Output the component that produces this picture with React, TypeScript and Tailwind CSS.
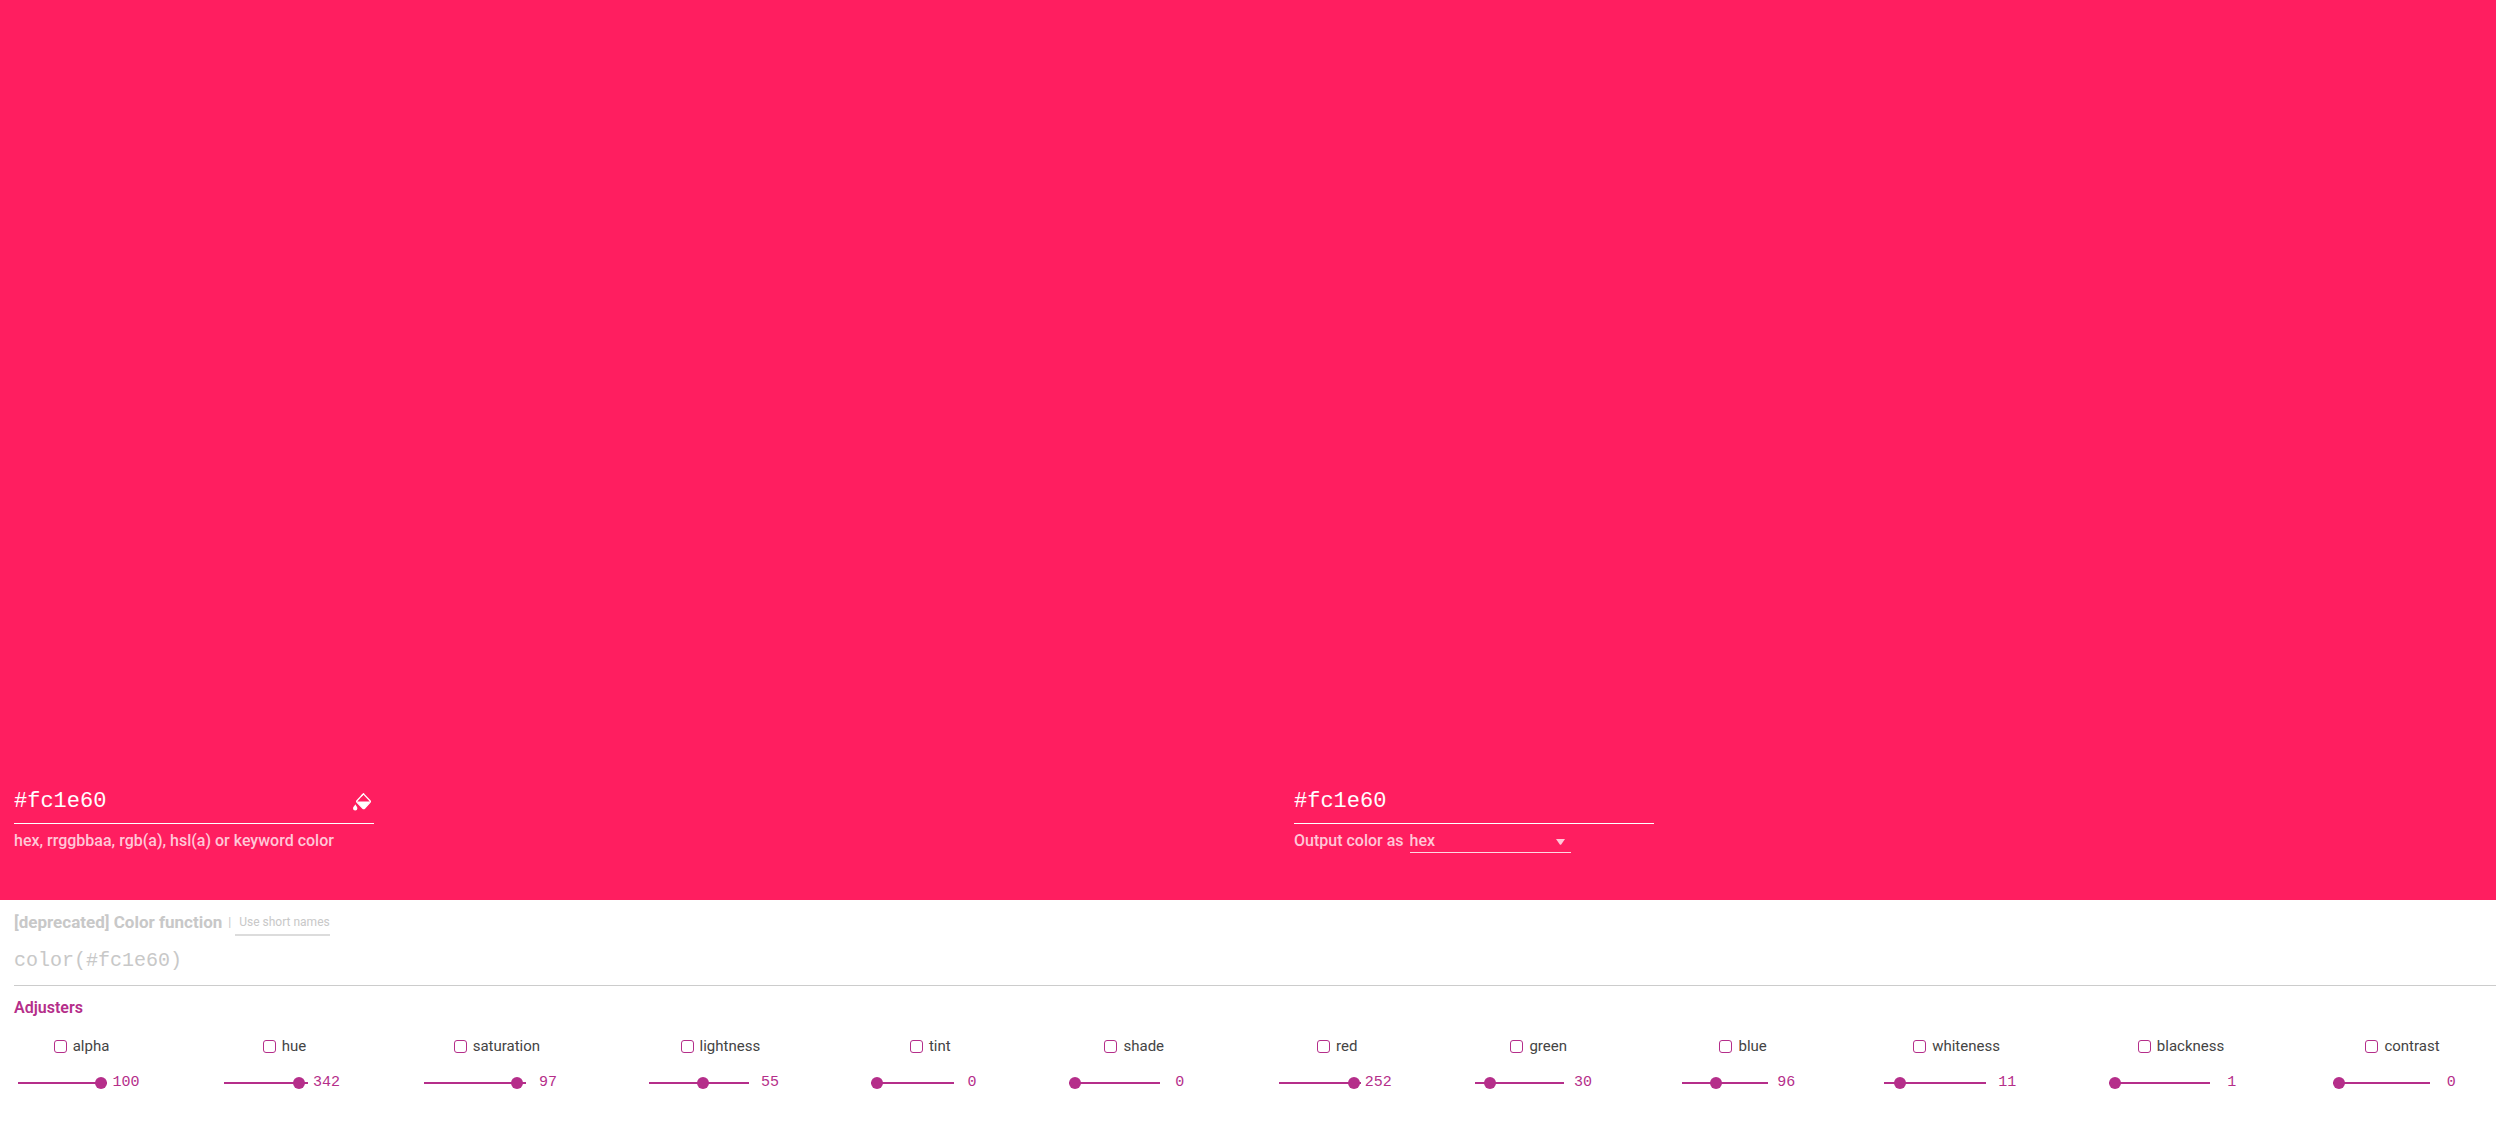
import { useState } from 'react';

interface AdjusterType {
  name: string;
  value: number;
  max: number;
  width: string;
}

const adjusters: AdjusterType[] = [
  { name: 'alpha', value: 100, max: 100, width: 'w-[135px]' },
  { name: 'hue', value: 342, max: 360, width: 'w-[128px]' },
  { name: 'saturation', value: 97, max: 100, width: 'w-[154px]' },
  { name: 'lightness', value: 55, max: 100, width: 'w-[150px]' },
  { name: 'tint', value: 0, max: 100, width: 'w-[127px]' },
  { name: 'shade', value: 0, max: 100, width: 'w-[138px]' },
  { name: 'red', value: 252, max: 255, width: 'w-[125px]' },
  { name: 'green', value: 30, max: 255, width: 'w-[135px]' },
  { name: 'blue', value: 96, max: 255, width: 'w-[131px]' },
  { name: 'whiteness', value: 11, max: 100, width: 'w-[153px]' },
  { name: 'blackness', value: 1, max: 100, width: 'w-[153px]' },
  { name: 'contrast', value: 0, max: 100, width: 'w-[147px]' },
];

const formats = ['hex', 'rgb', 'hsl', 'keyword'];

function BucketIcon() {
  return (
    <svg viewBox="0 0 18 18" className="h-[18px] w-[18px]" fill="none" aria-hidden="true">
      <path
        d="M8.6 2.8 10.6.8"
        stroke="currentColor"
        strokeWidth="1.3"
        strokeLinecap="round"
      />
      <path
        d="M9.6 1.6q.8-.8 1.6 0l5.8 6.2q.7.8 0 1.6l-5.4 5.8q-.9.9-1.8 0L4 9.4q-.7-.8 0-1.6Z"
        stroke="currentColor"
        strokeWidth="1.3"
        strokeLinejoin="round"
      />
      <path d="M3.6 8.6h13.8l-5.8 6.6q-.9.9-1.8 0Z" fill="currentColor" />
      <path d="M2.4 11.2c.5 1.6 2 2.4 2 4.1a2.2 2.2 0 0 1-4.4 0c0-1.7 1.9-2.5 2.4-4.1Z" fill="currentColor" />
    </svg>
  );
}

function Adjuster({ name, value, max, width }: AdjusterType) {
  const [current, setCurrent] = useState(value);
  const [enabled, setEnabled] = useState(false);

  return (
    <div className={`flex flex-col px-1 ${width}`}>
      <label className="flex h-6 items-center justify-center gap-1.5 text-[15px] text-[#444]">
        <input
          type="checkbox"
          checked={enabled}
          onChange={(e) => setEnabled(e.target.checked)}
          className="h-[13px] w-[13px] appearance-none rounded-[3px] border border-[#b52e8a] checked:bg-[#b52e8a]"
        />
        {name}
      </label>
      <div className="mt-[13px] flex h-6 items-center">
        <input
          type="range"
          aria-label={name}
          min={0}
          max={max}
          value={current}
          onChange={(e) => setCurrent(Number(e.target.value))}
          className="h-3 w-[70%] appearance-none bg-transparent [&::-webkit-slider-runnable-track]:h-0.5 [&::-webkit-slider-runnable-track]:bg-[#b52e8a] [&::-webkit-slider-thumb]:-mt-[5px] [&::-webkit-slider-thumb]:h-3 [&::-webkit-slider-thumb]:w-3 [&::-webkit-slider-thumb]:appearance-none [&::-webkit-slider-thumb]:rounded-full [&::-webkit-slider-thumb]:bg-[#b52e8a]"
        />
        <output className="flex flex-1 justify-center font-['Liberation_Mono',monospace] text-[15px] text-[#b52e8a]">
          {current}
        </output>
      </div>
    </div>
  );
}

export default function App() {
  const [color, setColor] = useState('#fc1e60');
  const [format, setFormat] = useState('hex');
  const [shortNames, setShortNames] = useState(false);

  return (
    <div className="flex min-h-screen flex-col bg-white font-[Roboto,sans-serif]">
      <section className="grid flex-1 grid-cols-[40fr_38fr] items-end bg-[#ff1e60] pb-[47px] text-white">
        <div className="px-3.5">
          <div className="flex h-11 w-[360px] items-center border-b border-white pr-[3px]">
            <input
              id="color"
              type="text"
              value={color}
              onChange={(e) => setColor(e.target.value)}
              className="min-w-0 flex-1 bg-transparent font-['Liberation_Mono',monospace] text-[22px] outline-none"
            />
            <button type="button" aria-label="Pick a color">
              <BucketIcon />
            </button>
          </div>
          <label htmlFor="color" className="mt-[5px] flex h-6 items-center text-base font-medium text-[#ffc7d7]">
            hex, rrggbbaa, rgb(a), hsl(a) or keyword color
          </label>
        </div>

        <div className="px-3.5">
          <div className="flex h-11 w-[360px] items-center border-b border-white">
            <input
              type="text"
              readOnly
              aria-label="Output color"
              value={color}
              className="min-w-0 flex-1 bg-transparent font-['Liberation_Mono',monospace] text-[22px] outline-none"
            />
          </div>
          <div className="mt-[5px] flex h-6 items-center gap-1.5 text-base font-medium text-[#ffc7d7]">
            <label htmlFor="format">Output color as</label>
            <div className="relative w-[161px]">
              <select
                id="format"
                value={format}
                onChange={(e) => setFormat(e.target.value)}
                className="block h-6 w-full appearance-none border-b border-[#ffd7e2] bg-transparent outline-none"
              >
                {formats.map((f) => (
                  <option key={f} value={f}>
                    {f}
                  </option>
                ))}
              </select>
              <svg
                viewBox="0 0 9 6"
                className="pointer-events-none absolute top-2.5 right-1.5 h-1.5 w-[9px]"
                fill="currentColor"
                aria-hidden="true"
              >
                <path d="M0 0h9L5.2 5.4q-.7.8-1.4 0Z" />
              </svg>
            </div>
          </div>
        </div>
      </section>

      <section className="pt-2.5 pb-[26px] pl-3.5">
        <div className="flex h-[26px] items-start text-[#c8c8c8]">
          <label htmlFor="fn" className="text-[17px] leading-6 font-bold">
            [deprecated] Color function
          </label>
          <span className="ml-1.5 text-xs leading-6">|</span>
          <button
            type="button"
            onClick={() => setShortNames(!shortNames)}
            className="ml-1 border-b-2 border-[#dcdcdc] pl-1 text-xs leading-6"
          >
            {shortNames ? 'Use long names' : 'Use short names'}
          </button>
        </div>
        <input
          id="fn"
          type="text"
          readOnly
          value={`color(${color})`}
          className="block h-[50px] w-full border-b border-[#ccc] bg-transparent font-['Liberation_Mono',monospace] text-xl text-[#c8c8c8] outline-none"
        />
        <h2 className="mt-2.5 h-6 text-base leading-6 font-semibold text-[#b52e8a]">Adjusters</h2>
        <div className="mt-3.5 flex flex-wrap justify-between gap-y-4 pr-5">
          {adjusters.map((adjuster) => (
            <Adjuster key={adjuster.name} {...adjuster} />
          ))}
        </div>
      </section>
    </div>
  );
}
